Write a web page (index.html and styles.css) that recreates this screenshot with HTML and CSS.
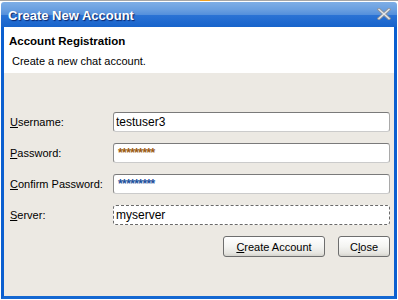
FILE: index.html
```html
<!DOCTYPE html>
<html lang="en">
<head>
  <meta charset="UTF-8">
  <title>Create New Account</title>
  <link rel="stylesheet" href="styles.css">
</head>
<body>
  <div class="top-strip"><span class="tab"></span></div>
  <div class="window">
    <div class="titlebar">
      <span class="title">Create New Account</span>
      <svg class="close-x" width="14" height="12" viewBox="0 0 14 12">
        <path d="M2 1.5 L12 10.5 M12 1.5 L2 10.5" stroke="#8d939c" stroke-width="3.2" stroke-linecap="square"/>
        <path d="M2 1.5 L12 10.5 M12 1.5 L2 10.5" stroke="#e4e6ea" stroke-width="1.4" stroke-linecap="square"/>
      </svg>
    </div>
    <div class="frame">
      <div class="header">
        <div class="heading">Account Registration</div>
        <div class="subtext">Create a new chat account.</div>
      </div>
      <div class="content">
        <div class="row">
          <label class="label"><u>U</u>sername:</label>
          <input class="field" type="text" value="testuser3">
        </div>
        <div class="row">
          <label class="label"><u>P</u>assword:</label>
          <div class="field stars orange">*********</div>
        </div>
        <div class="row">
          <label class="label"><u>C</u>onfirm Password:</label>
          <div class="field stars blue">*********</div>
        </div>
        <div class="row">
          <label class="label"><u>S</u>erver:</label>
          <input class="field focused" type="text" value="myserver">
        </div>
        <div class="buttons">
          <button class="btn create"><u>C</u>reate Account</button>
          <button class="btn close">C<u>l</u>ose</button>
        </div>
      </div>
    </div>
  </div>
</body>
</html>
```

FILE: styles.css
```css
body {
  margin: 0;
  padding: 0;
  background: #ffffff;
  font-family: "Liberation Sans", Arial, sans-serif;
  font-size: 11px;
  color: #000;
}
.top-strip {
  height: 2px;
  border-top: 1px solid #a6a6a6;
  box-sizing: border-box;
  position: relative;
}
.top-strip .tab {
  position: absolute;
  left: 200px;
  top: -1px;
  width: 10px;
  height: 1px;
  background: #f0a020;
}
.window {
  margin-left: 1px;
  width: 396px;
}
.titlebar {
  height: 25px;
  background: linear-gradient(to bottom, #7eaee6 0%, #6a9fe0 30%, #5590dc 50%, #2a72d4 54%, #1f69cf 80%, #1864cb 100%);
  display: flex;
  align-items: center;
  justify-content: space-between;
  padding: 0 6px 0 7px;
  border-radius: 3px 3px 0 0;
}
.title {
  color: #fff;
  font-weight: bold;
  font-size: 13px;
  text-shadow: 1px 1px 1px #0a246a;
  margin-top: 1px;
}
.close-x {
  margin-top: -2px;
}
.frame {
  border: 3px solid #0b5fd0;
  border-top: none;
  border-bottom-color: #1468d2;
}
.header {
  background: #fff;
  height: 46px;
  box-sizing: border-box;
  padding: 7px 0 0 5px;
}
.heading {
  font-weight: bold;
  font-size: 11.5px;
  line-height: 14px;
}
.subtext {
  font-size: 11px;
  line-height: 13px;
  margin: 7px 0 0 3px;
}
.content {
  background: #ece9e3;
  height: 223px;
  box-sizing: border-box;
  padding: 39px 4px 0 6px;
}
.row {
  display: flex;
  align-items: center;
  height: 20px;
  margin-bottom: 11px;
}
.label {
  width: 103px;
  font-size: 11px;
}
.field {
  width: 277px;
  height: 20px;
  box-sizing: border-box;
  border: 1px solid;
  border-color: #7a7a7a #a9a9a9 #cbcbcb #8c8c8c;
  border-radius: 3px;
  background: #fff;
  padding: 0 2px;
  font-family: "Liberation Sans", Arial, sans-serif;
  font-size: 12px;
  color: #000;
  outline: none;
  display: flex;
  align-items: center;
}
.field.focused {
  border: 1px dashed #6a6a6a;
}
.stars {
  font-size: 12px;
  font-weight: bold;
  letter-spacing: -0.6px;
  padding-left: 4px;
}
.stars.orange {
  color: #9a5a10;
}
.stars.blue {
  color: #1c4f9c;
}
.buttons {
  display: flex;
  justify-content: flex-end;
  gap: 13px;
  margin-top: 2px;
}
.btn {
  height: 21px;
  border: 1px solid #6e6e6e;
  border-radius: 3px;
  background: linear-gradient(to bottom, #ffffff 0%, #f4f4f2 50%, #e6e5e0 85%, #d4d3cd 100%);
  font-family: "Liberation Sans", Arial, sans-serif;
  font-size: 11px;
  color: #000;
  padding: 0;
}
.btn.create {
  width: 102px;
}
.btn.close {
  width: 52px;
}
```
